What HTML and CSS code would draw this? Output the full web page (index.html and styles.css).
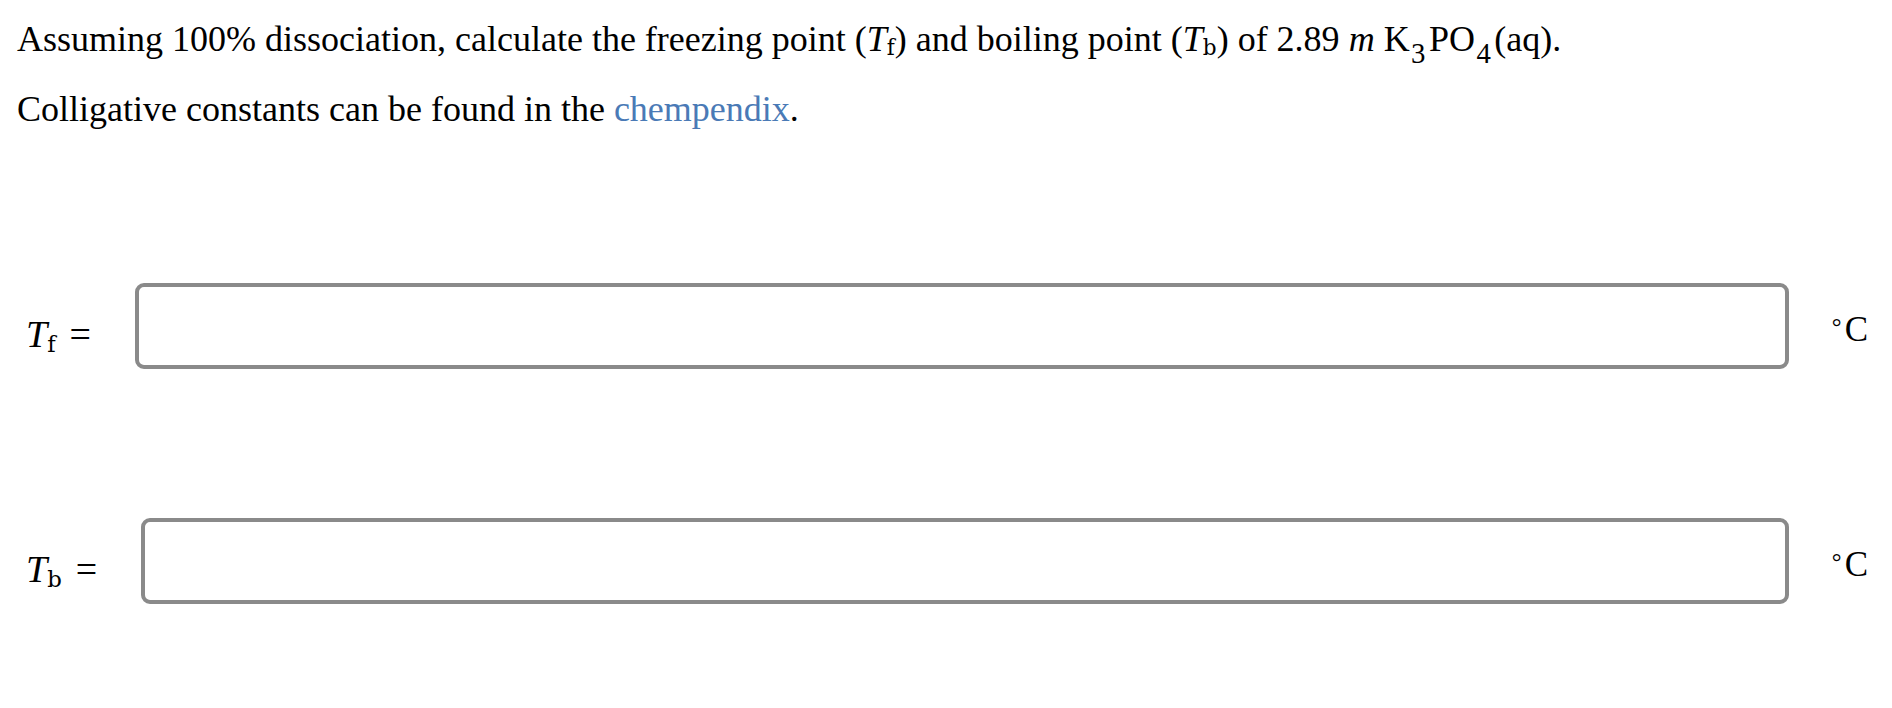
FILE: index.html
```html
<!DOCTYPE html>
<html lang="en">
<head>
<meta charset="utf-8">
<title>Colligative properties</title>
<link rel="stylesheet" href="styles.css">
</head>
<body>
<main class="page">
  <p class="question">Assuming 100% dissociation, calculate the freezing point (<span class="math"><i class="var">T</i><sub class="msub">f</sub></span>) and boiling point (<span class="math"><i class="var">T</i><sub class="msub">b</sub></span>) of 2.89 <i class="mol">m</i> K<sub class="chem">3</sub>PO<sub class="chem">4</sub>(aq).</p>
  <p class="question second">Colligative constants can be found in the <a class="link" href="#">chempendix</a>.</p>

  <div class="answers">
    <div class="row">
      <span class="label"><i class="var">T</i><sub class="msub">f</sub><span class="eq">=</span></span>
      <input class="box" type="text" aria-label="freezing point">
      <span class="unit"><span class="deg">°</span>C</span>
    </div>
    <div class="row">
      <span class="label"><i class="var">T</i><sub class="msub">b</sub><span class="eq">=</span></span>
      <input class="box" type="text" aria-label="boiling point">
      <span class="unit"><span class="deg">°</span>C</span>
    </div>
  </div>
</main>
</body>
</html>
```

FILE: styles.css
```css
html, body {
  margin: 0;
  padding: 0;
  background: #ffffff;
}

.page {
  padding: 0 24px 0 17px;
  font-family: "Liberation Serif", "Times New Roman", serif;
  color: #000;
}

.question {
  margin: 0;
  padding-top: 19px;
  font-size: 36px;
  line-height: 40px;
}

.second {
  padding-top: 30px;
}

.link {
  color: #4a7ab6;
  text-decoration: none;
}

.var {
  font-style: italic;
}

.mol {
  font-style: italic;
}

.msub {
  vertical-align: -0.2em;
  line-height: 0;
  font-family: "DejaVu Serif", serif;
  font-size: 0.6em;
}

.chem {
  font-size: 0.8em;
  vertical-align: -0.42em;
  line-height: 0;
  padding: 0 0.12em 0 0.05em;
}

.answers {
  margin-top: 154px;
  display: flex;
  flex-direction: column;
  gap: 149px;
}

.row {
  display: flex;
  align-items: center;
  height: 86px;
}

.label {
  font-size: 38px;
  padding-left: 9px;
  margin-right: 44px;
  white-space: nowrap;
  position: relative;
  top: 8px;
}

.eq {
  margin-left: 14px;
}

.box {
  flex: 1;
  height: 86px;
  box-sizing: border-box;
  border: 4px solid #8a8a8a;
  border-radius: 9px;
  background: #fff;
  margin: 0;
  padding: 0 12px;
  font-size: 30px;
}

.unit {
  margin-left: 43px;
  font-size: 35px;
  position: relative;
  top: 4px;
}

.deg {
  font-size: 0.7em;
  position: relative;
  top: -0.25em;
  margin-right: 3px;
}
```
